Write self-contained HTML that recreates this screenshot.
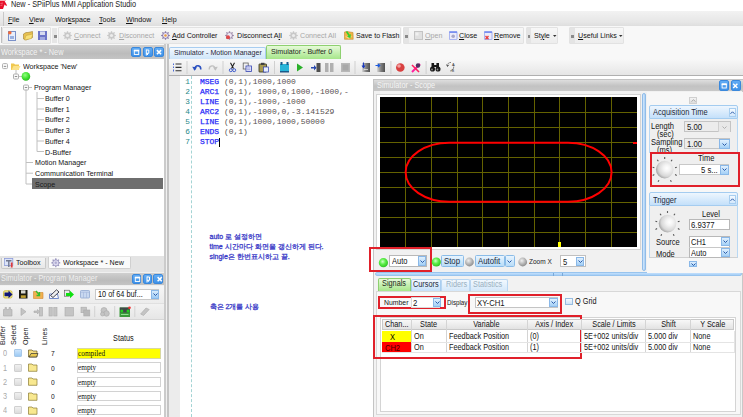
<!DOCTYPE html>
<html><head><meta charset="utf-8">
<style>
*{margin:0;padding:0;box-sizing:border-box}
html,body{width:743px;height:417px;overflow:hidden;background:#f0f0f0;font-family:"Liberation Sans",sans-serif;font-size:7.2px;color:#141414}
.a{position:absolute}
.t{position:absolute;white-space:nowrap;line-height:10px;height:10px;}
.hdr{position:absolute;background:linear-gradient(#cfcfcf,#bcbcbc 60%,#c4c4c4);color:#f4f4f4}
.hb{position:absolute;width:9.6px;height:10px;background:linear-gradient(#62acf4,#3f92e8);border:1px solid #3a88dc;border-radius:2px}
.grip{position:absolute;width:3px;height:3px;background:#9a9a9a}
</style></head><body>

<!-- title bar -->
<div class="a" style="left:0;top:0;width:743px;height:11px;background:#fff"></div>
<svg class="a" style="left:0;top:0" width="9" height="10"><rect x="0" y="0" width="6" height="1" fill="#f8b0b8"/><path d="M0 1 L4.6 1 L7 5.3 L6.2 6 L4.6 4.6 L3 9 L0 9 Z" fill="#e8102a"/><path d="M0.5 3.5 L3 3 M0.5 5.5 L2.5 5" stroke="#f8a0a8" stroke-width="0.6"/></svg>
<div class="t" style="left:10.8px;top:0.3px;font-size:8.2px;color:#222;transform:scaleX(0.895);transform-origin:0 0">New - SPiiPlus MMI Application Studio</div>

<!-- menu bar -->
<div class="a" style="left:0;top:11px;width:743px;height:15.5px;background:linear-gradient(#f2f2f2,#e6e6e6 75%,#dedede);border-bottom:1px solid #f8f8f8"></div>
<div class="a" style="left:0;top:12px;width:4px;height:14px;border-right:1px solid #c8c8c8"></div>
<div class="t" style="left:8.4px;top:14.5px;font-size:7.92px;transform:scaleX(0.9);transform-origin:0 0"><u>F</u>ile</div>
<div class="t" style="left:29.4px;top:14.5px;font-size:7.92px;transform:scaleX(0.9);transform-origin:0 0"><u>V</u>iew</div>
<div class="t" style="left:55px;top:14.5px;font-size:7.92px;transform:scaleX(0.9);transform-origin:0 0">Wor<u>k</u>space</div>
<div class="t" style="left:99.2px;top:14.5px;font-size:7.92px;transform:scaleX(0.9);transform-origin:0 0"><u>T</u>ools</div>
<div class="t" style="left:125.8px;top:14.5px;font-size:7.92px;transform:scaleX(0.9);transform-origin:0 0"><u>W</u>indow</div>
<div class="t" style="left:162.4px;top:14.5px;font-size:7.92px;transform:scaleX(0.9);transform-origin:0 0"><u>H</u>elp</div>

<!-- toolbar -->
<div class="a" style="left:0;top:26.5px;width:743px;height:18px;background:#f8f8f8"></div>
<div class="a" style="left:0;top:27.4px;width:2px;height:16px;border-right:1px solid #c0c0c0"></div>
<div class="a" style="left:2.2px;top:27.4px;width:49px;height:16.2px;background:linear-gradient(#f7f7f7,#ededed);border:1px solid #e2e2e2;border-radius:1px"></div>
<div class="a" style="left:52px;top:28px;width:5px;height:15px;background:#e6e6e6"></div><div class="grip" style="left:54px;top:34.5px;width:2.5px;height:3px;background:#8a8a8a"></div>
<svg class="a" style="left:8px;top:30.5px" width="9" height="10"><rect x="0.5" y="0.5" width="7" height="9" fill="#e8eefa" stroke="#7a90c8"/><rect x="2" y="5" width="4" height="3" fill="#9ab0e0"/><circle cx="1.8" cy="1.8" r="1.8" fill="#f06a3a"/></svg>
<svg class="a" style="left:23px;top:30.5px" width="10" height="10"><path d="M0.5 3 L3 1.5 L5 1.5 L9.5 0.5 L9.5 6.5 L3 9 L0.5 8 Z" fill="#e8c050" stroke="#a08030" stroke-width="0.6"/><path d="M1.5 9 L3 4.5 L9.8 3 L8.5 7.5 Z" fill="#f8e078" stroke="#c0a040" stroke-width="0.5"/></svg>
<svg class="a" style="left:38px;top:30.5px" width="9" height="9"><rect x="0" y="0" width="9" height="9" fill="#6c74c8"/><rect x="2" y="0.5" width="5" height="3.5" fill="#d8dcf0"/><rect x="2" y="6" width="5" height="3" fill="#a0a8e0"/></svg>

<div class="a" style="left:58.1px;top:27.4px;width:343px;height:16.2px;background:linear-gradient(#f7f7f7,#ededed);border:1px solid #e2e2e2;border-radius:1px"></div>
<svg class="a" style="left:62.5px;top:30.5px" width="9" height="9"><path d="M3.75 1.39 L3.93 0.14 L5.07 0.14 L5.25 1.39 L6.17 1.77 L7.18 1.01 L7.99 1.82 L7.23 2.83 L7.61 3.75 L8.86 3.93 L8.86 5.07 L7.61 5.25 L7.23 6.17 L7.99 7.18 L7.18 7.99 L6.17 7.23 L5.25 7.61 L5.07 8.86 L3.93 8.86 L3.75 7.61 L2.83 7.23 L1.82 7.99 L1.01 7.18 L1.77 6.17 L1.39 5.25 L0.14 5.07 L0.14 3.93 L1.39 3.75 L1.77 2.83 L1.01 1.82 L1.82 1.01 L2.83 1.77 Z" fill="#c8c8c8"/><circle cx="4.5" cy="4.5" r="1.6" fill="#ececec"/></svg>
<div class="t" style="left:74.4px;top:30.5px;color:#a8a8a8;font-size:7.92px;transform:scaleX(0.9);transform-origin:0 0"><u>C</u>onnect</div>
<svg class="a" style="left:107.4px;top:30.5px" width="9" height="9"><path d="M3.75 1.39 L3.93 0.14 L5.07 0.14 L5.25 1.39 L6.17 1.77 L7.18 1.01 L7.99 1.82 L7.23 2.83 L7.61 3.75 L8.86 3.93 L8.86 5.07 L7.61 5.25 L7.23 6.17 L7.99 7.18 L7.18 7.99 L6.17 7.23 L5.25 7.61 L5.07 8.86 L3.93 8.86 L3.75 7.61 L2.83 7.23 L1.82 7.99 L1.01 7.18 L1.77 6.17 L1.39 5.25 L0.14 5.07 L0.14 3.93 L1.39 3.75 L1.77 2.83 L1.01 1.82 L1.82 1.01 L2.83 1.77 Z" fill="#c8c8c8"/><circle cx="4.5" cy="4.5" r="1.6" fill="#ececec"/></svg>
<div class="t" style="left:119px;top:30.5px;color:#a8a8a8;font-size:7.92px;transform:scaleX(0.9);transform-origin:0 0"><u>D</u>isconnect</div>
<svg class="a" style="left:160.6px;top:30.5px" width="9" height="9"><path d="M3.75 1.39 L3.93 0.14 L5.07 0.14 L5.25 1.39 L6.17 1.77 L7.18 1.01 L7.99 1.82 L7.23 2.83 L7.61 3.75 L8.86 3.93 L8.86 5.07 L7.61 5.25 L7.23 6.17 L7.99 7.18 L7.18 7.99 L6.17 7.23 L5.25 7.61 L5.07 8.86 L3.93 8.86 L3.75 7.61 L2.83 7.23 L1.82 7.99 L1.01 7.18 L1.77 6.17 L1.39 5.25 L0.14 5.07 L0.14 3.93 L1.39 3.75 L1.77 2.83 L1.01 1.82 L1.82 1.01 L2.83 1.77 Z" fill="#8a7aa8"/><circle cx="4.5" cy="4.5" r="2.4" fill="#f0e8f8"/><circle cx="4.5" cy="4.5" r="1.3" fill="#e8a040"/></svg>
<div class="t" style="left:171.5px;top:30.5px;font-size:7.92px;transform:scaleX(0.9);transform-origin:0 0"><u>A</u>dd Controller</div>
<svg class="a" style="left:225px;top:30.5px" width="9" height="9"><path d="M3.75 1.39 L3.93 0.14 L5.07 0.14 L5.25 1.39 L6.17 1.77 L7.18 1.01 L7.99 1.82 L7.23 2.83 L7.61 3.75 L8.86 3.93 L8.86 5.07 L7.61 5.25 L7.23 6.17 L7.99 7.18 L7.18 7.99 L6.17 7.23 L5.25 7.61 L5.07 8.86 L3.93 8.86 L3.75 7.61 L2.83 7.23 L1.82 7.99 L1.01 7.18 L1.77 6.17 L1.39 5.25 L0.14 5.07 L0.14 3.93 L1.39 3.75 L1.77 2.83 L1.01 1.82 L1.82 1.01 L2.83 1.77 Z" fill="#9a88a8"/><circle cx="4.5" cy="4.5" r="2.4" fill="#f0e8f4"/><circle cx="3" cy="6.2" r="2" fill="#e04848"/></svg>
<div class="t" style="left:236.6px;top:30.5px;font-size:7.92px;transform:scaleX(0.9);transform-origin:0 0">Disconnect A<u>l</u>l</div>
<svg class="a" style="left:289.2px;top:30.5px" width="9" height="9"><path d="M3.75 1.39 L3.93 0.14 L5.07 0.14 L5.25 1.39 L6.17 1.77 L7.18 1.01 L7.99 1.82 L7.23 2.83 L7.61 3.75 L8.86 3.93 L8.86 5.07 L7.61 5.25 L7.23 6.17 L7.99 7.18 L7.18 7.99 L6.17 7.23 L5.25 7.61 L5.07 8.86 L3.93 8.86 L3.75 7.61 L2.83 7.23 L1.82 7.99 L1.01 7.18 L1.77 6.17 L1.39 5.25 L0.14 5.07 L0.14 3.93 L1.39 3.75 L1.77 2.83 L1.01 1.82 L1.82 1.01 L2.83 1.77 Z" fill="#c8c8c8"/><circle cx="4.5" cy="4.5" r="1.6" fill="#ececec"/></svg>
<div class="t" style="left:300px;top:30.5px;color:#a8a8a8;font-size:7.92px;transform:scaleX(0.9);transform-origin:0 0">Connect All</div>
<svg class="a" style="left:343.9px;top:30.9px" width="10" height="9"><path d="M0.5 1 L3 0.5 L9 1.5 L9.2 8.3 L0.5 8.3 Z" fill="#f0b444" stroke="#c08830" stroke-width="0.6"/><path d="M1 5.5 L4.5 7.8 L8.5 5.5" fill="#f8d890" stroke="none"/><path d="M2.5 0.5 L5.2 4.5" stroke="#30d030" stroke-width="1.6"/><path d="M3 5.8 L6.8 3 L6.5 7.2 Z" fill="#30d030"/></svg>
<div class="t" style="left:355.8px;top:30.5px;font-size:7.92px;transform:scaleX(0.9);transform-origin:0 0">Save to Flash</div>
<div class="a" style="left:401.6px;top:27.4px;width:1px;height:16.2px;background:#fff"></div>

<div class="a" style="left:403px;top:27.4px;width:121px;height:16.2px;background:linear-gradient(#f7f7f7,#ededed);border:1px solid #e2e2e2;border-radius:1px"></div>
<div class="a" style="left:403.5px;top:28px;width:5px;height:15px;background:#e4e4e4"></div><div class="grip" style="left:405px;top:34.5px;width:2.5px;height:3px;background:#8a8a8a"></div>
<svg class="a" style="left:414px;top:31px" width="9" height="9"><rect x="0.5" y="0.5" width="8" height="8" fill="#e0e0e0" stroke="#c4c4c4"/><rect x="1.5" y="1.5" width="3" height="3" fill="#f0f0f0"/></svg>
<div class="t" style="left:424.6px;top:30.5px;color:#a8a8a8;font-size:7.92px;transform:scaleX(0.9);transform-origin:0 0"><u>O</u>pen</div>
<svg class="a" style="left:448.9px;top:31.2px" width="9" height="9"><rect x="0.4" y="0.4" width="7.6" height="8.2" rx="0.6" fill="#ecebfa" stroke="#90a0f0" stroke-width="0.8"/><rect x="0.4" y="0.4" width="7.6" height="1.6" fill="#7a90f0"/><circle cx="4.2" cy="5.2" r="1.8" fill="#a8a8c8"/></svg>
<div class="t" style="left:459.4px;top:30.5px;font-size:7.92px;transform:scaleX(0.9);transform-origin:0 0"><u>C</u>lose</div>
<svg class="a" style="left:483.9px;top:31.2px" width="9" height="9"><rect x="0.4" y="0.4" width="7.6" height="8.2" rx="0.6" fill="#ecebfa" stroke="#90a0f0" stroke-width="0.8"/><rect x="0.4" y="0.4" width="7.6" height="1.6" fill="#7a90f0"/><path d="M1.5 5 L4.5 8.3 M4.5 5 L1.5 8.3" stroke="#e84040" stroke-width="1.3"/></svg>
<div class="t" style="left:494.3px;top:30.5px;font-size:7.92px;transform:scaleX(0.9);transform-origin:0 0"><u>R</u>emove</div>

<div class="a" style="left:525.7px;top:27.4px;width:32.3px;height:16.2px;background:linear-gradient(#f7f7f7,#ededed);border:1px solid #e2e2e2;border-radius:1px"></div>
<div class="a" style="left:526px;top:28px;width:5px;height:15px;background:#e4e4e4"></div><div class="grip" style="left:527.5px;top:34.5px;width:2.5px;height:3px;background:#8a8a8a"></div>
<div class="t" style="left:534.4px;top:30.5px;font-size:7.92px;transform:scaleX(0.9);transform-origin:0 0">St<u>y</u>le</div>
<svg class="a" style="left:552.5px;top:34.5px" width="4" height="3"><path d="M0 0 L3.5 0 L1.75 2 Z" fill="#333"/></svg>

<div class="a" style="left:569.3px;top:27.4px;width:55px;height:16.2px;background:linear-gradient(#f7f7f7,#ededed);border:1px solid #e2e2e2;border-radius:1px"></div>
<div class="a" style="left:569.6px;top:28px;width:5px;height:15px;background:#e4e4e4"></div><div class="grip" style="left:571px;top:34.5px;width:2.5px;height:3px;background:#8a8a8a"></div>
<div class="t" style="left:578.3px;top:30.5px;font-size:7.92px;transform:scaleX(0.9);transform-origin:0 0"><u>U</u>seful Links</div>
<svg class="a" style="left:619px;top:34.5px" width="4" height="3"><path d="M0 0 L3.5 0 L1.75 2 Z" fill="#333"/></svg>


<!-- left panel: workspace -->
<div class="hdr" style="left:0;top:45.2px;width:164px;height:13.5px"></div>
<div class="t" style="left:1px;top:47.5px;color:#f2f2f2;font-size:8.14px;transform:scaleX(0.9);transform-origin:0 0">Workspace * - New</div>
<div class="a" style="left:0;top:58.7px;width:164.5px;height:198px;background:#fff"></div>

<div class="hb" style="left:131.3px;top:47.3px"></div><div class="hb" style="left:143.1px;top:47.3px"></div><div class="hb" style="left:154.3px;top:47.3px"></div>
<svg class="a" style="left:131.2px;top:47.3px" width="33" height="10"><rect x="3.3" y="3.3" width="4.4" height="4.2" fill="none" stroke="#fff" stroke-width="0.9"/><rect x="2.9" y="2.8" width="5.2" height="1.6" fill="#fff"/><path d="M15.3 3 L17.8 3 L17.8 6.3 L15.3 6.3 M15.3 2.5 L15.3 8.5 M16.5 6.3 L16.5 8" stroke="#fff" stroke-width="1" fill="none"/><path d="M25.9 3.1 L30.1 7.3 M30.1 3.1 L25.9 7.3" stroke="#fff" stroke-width="1.5"/></svg>
<!-- tree -->
<svg class="a" style="left:0;top:59px" width="164" height="135">
 <g stroke="#c0c0c0" stroke-width="1" fill="none">
  <path d="M16 10 L16 15"/>
  <path d="M26 31 L26 125 L32 125"/>
  <path d="M37 33 L37 92.5 L44 92.5"/>
  <path d="M37 39.5 L44 39.5 M37 50 L44 50 M37 60.7 L44 60.7 M37 71.4 L44 71.4 M37 82 L44 82"/>
  <path d="M26 103.5 L33 103.5 M26 114.2 L33 114.2"/>
  <path d="M18.5 17.5 L22 17.5 M28.5 28.5 L32 28.5"/>
 </g>
 <rect x="2.5" y="4.6" width="5" height="5" rx="1" fill="#fafafa" stroke="#b0b0b0"/><path d="M3.8 7.4 L6.2 7.4" stroke="#909090"/>
 <rect x="13.5" y="15" width="5" height="5" rx="1" fill="#fafafa" stroke="#b0b0b0"/><path d="M14.8 17.5 L17.2 17.5" stroke="#909090"/>
 <rect x="23.5" y="26" width="5" height="5" rx="1" fill="#fafafa" stroke="#b0b0b0"/><path d="M24.8 28.5 L27.2 28.5" stroke="#909090"/>
 <path d="M11 4.5 L14 4.5 L15 5.5 L19 5.5 L19 11 L11 11 Z" fill="#f0c850"/><path d="M11.5 11 L13.5 7 L20.5 7 L18.5 11 Z" fill="#fbe28a"/>
 <defs><radialGradient id="gb" cx="40%" cy="35%" r="70%"><stop offset="0" stop-color="#90ff80"/><stop offset="0.6" stop-color="#40e030"/><stop offset="1" stop-color="#28b820"/></radialGradient></defs><circle cx="25.9" cy="17.4" r="4.3" fill="url(#gb)"/>
</svg>
<div class="t" style="left:23px;top:62.3px;font-size:7.92px;transform:scaleX(0.9);transform-origin:0 0">Workspace 'New'</div>
<div class="t" style="left:34.4px;top:83.1px;font-size:7.92px;transform:scaleX(0.9);transform-origin:0 0">Program Manager</div>
<div class="t" style="left:45px;top:94.1px;font-size:7.92px;transform:scaleX(0.9);transform-origin:0 0">Buffer 0</div>
<div class="t" style="left:45px;top:104.7px;font-size:7.92px;transform:scaleX(0.9);transform-origin:0 0">Buffer 1</div>
<div class="t" style="left:45px;top:115.4px;font-size:7.92px;transform:scaleX(0.9);transform-origin:0 0">Buffer 2</div>
<div class="t" style="left:45px;top:126.1px;font-size:7.92px;transform:scaleX(0.9);transform-origin:0 0">Buffer 3</div>
<div class="t" style="left:45px;top:136.8px;font-size:7.92px;transform:scaleX(0.9);transform-origin:0 0">Buffer 4</div>
<div class="t" style="left:45px;top:147.5px;font-size:7.92px;transform:scaleX(0.9);transform-origin:0 0">D-Buffer</div>
<div class="t" style="left:34.7px;top:158.2px;font-size:7.92px;transform:scaleX(0.9);transform-origin:0 0">Motion Manager</div>
<div class="t" style="left:34.7px;top:168.9px;font-size:7.92px;transform:scaleX(0.9);transform-origin:0 0">Communication Terminal</div>
<div class="a" style="left:32px;top:178.3px;width:131px;height:10.4px;background:#6e6e6e"></div>
<div class="t" style="left:34.7px;top:179.6px;color:#1a1a1a;font-size:7.92px;transform:scaleX(0.9);transform-origin:0 0">Scope</div>

<!-- left bottom tabs -->
<div class="a" style="left:0;top:256.4px;width:164.5px;height:15.5px;background:#e4e4e4"></div>
<div class="a" style="left:1.1px;top:257.5px;width:45.4px;height:11px;background:linear-gradient(#f4f4f4,#e8e8e8);border:1px solid #c8c8c8;border-top:none;border-radius:0 0 2px 2px"></div>
<svg class="a" style="left:4px;top:258px" width="10" height="10"><rect x="0.3" y="0.5" width="8.5" height="7" fill="#dce4f8" stroke="#8a9ad8" stroke-width="0.8"/><path d="M2 2.8 L7.5 2.8 M4.8 2.8 L4.8 9" stroke="#707890" stroke-width="1.4"/><rect x="6.8" y="4.5" width="1.8" height="5" fill="#e03a3a"/></svg>
<div class="t" style="left:15.5px;top:258px;font-size:7.92px;transform:scaleX(0.9);transform-origin:0 0">Toolbox</div>
<div class="a" style="left:47.9px;top:257px;width:83px;height:12px;background:#fafafa;border:1px solid #d0d0d0;border-top:none;border-radius:0 0 2px 2px"></div>
<svg class="a" style="left:51px;top:258.3px" width="10" height="10"><path d="M4.00 1.50 L4.22 0.34 L5.38 0.34 L5.60 1.50 L6.57 1.90 L7.54 1.23 L8.37 2.06 L7.70 3.03 L8.10 4.00 L9.26 4.22 L9.26 5.38 L8.10 5.60 L7.70 6.57 L8.37 7.54 L7.54 8.37 L6.57 7.70 L5.60 8.10 L5.38 9.26 L4.22 9.26 L4.00 8.10 L3.03 7.70 L2.06 8.37 L1.23 7.54 L1.90 6.57 L1.50 5.60 L0.34 5.38 L0.34 4.22 L1.50 4.00 L1.90 3.03 L1.23 2.06 L2.06 1.23 L3.03 1.90 Z" fill="#9c98c0"/><circle cx="4.8" cy="4.8" r="2.6" fill="#dcdaf0"/><circle cx="4.8" cy="4.8" r="1.2" fill="#b0acd0"/></svg>
<div class="t" style="left:62.5px;top:258px;font-size:7.92px;transform:scaleX(0.9);transform-origin:0 0">Workspace * - New</div>

<!-- program manager -->
<div class="hdr" style="left:0;top:272.9px;width:165px;height:12.6px"></div>
<div class="t" style="left:1px;top:274px;color:#f0f0f0;font-size:8.14px;transform:scaleX(0.9);transform-origin:0 0">Simulator - Program Manager</div>
<div class="hb" style="left:131.6px;top:274.3px"></div><div class="hb" style="left:142.5px;top:274.3px"></div><div class="hb" style="left:153.2px;top:274.3px"></div>
<svg class="a" style="left:131.6px;top:274.3px" width="32" height="10"><rect x="3.3" y="3.3" width="4.4" height="4.2" fill="none" stroke="#fff" stroke-width="0.9"/><rect x="2.9" y="2.8" width="5.2" height="1.6" fill="#fff"/><path d="M15 3 L17.5 3 L17.5 6.3 L15 6.3 M15 2.5 L15 8.5 M16.2 6.3 L16.2 8" stroke="#fff" stroke-width="1" fill="none"/><path d="M25.6 3.1 L29.8 7.3 M29.8 3.1 L25.6 7.3" stroke="#fff" stroke-width="1.5"/></svg>
<div class="a" style="left:0;top:285.5px;width:164.5px;height:17.5px;background:linear-gradient(#f6f6f6,#ececec)"></div>
<div class="a" style="left:0;top:303px;width:164.5px;height:17px;background:linear-gradient(#f2f2f2,#e6e6e6);border-top:1px solid #e0e0e0;border-bottom:1px solid #d6d6d6"></div>
<svg class="a" style="left:2px;top:289px" width="90" height="11">
 <rect x="1.5" y="1.8" width="8.5" height="7.2" rx="1.5" fill="#f4ec90" stroke="#c8b830" stroke-width="0.8"/>
 <path d="M2.5 3.5 L6.5 3.5 L6.5 1.5 L10.5 5.4 L6.5 9.2 L6.5 7.3 L2.5 7.3 Z" fill="#101878"/>
 <rect x="17" y="1" width="8.5" height="8.5" fill="#1a1a10"/><rect x="19" y="1.3" width="4.5" height="3.2" fill="#d8d8d0"/><rect x="18.8" y="6.3" width="5" height="2.6" fill="#c0a030"/>
 <path d="M31.5 2.5 L35 2.5 L36 3.5 L41 3.5 L41 9.5 L31.5 9.5 Z" fill="#f0b050" stroke="#d08830" stroke-width="0.6"/>
 <path d="M34 2 L37.5 6.2 M37.5 3 L37.5 6.5 L34.5 6.5" stroke="#30c030" stroke-width="1.3" fill="none"/>
 <path d="M47.5 5 L55.5 5 L56.5 9.5 L47.5 9.5 Z" fill="#f8f8fc" stroke="#5070c0" stroke-width="0.8"/>
 <path d="M48.5 6.5 L54.5 0.8 L57 3 L51 8.5 Z" fill="#f0f0f0" stroke="#303040" stroke-width="0.9"/>
 <rect x="62.5" y="1.2" width="5" height="6" fill="#e8e8e8" stroke="#505050" stroke-width="0.6"/>
 <path d="M64 4 L68 4 L68 1.8 L72 5.5 L68 9.2 L68 7 L64 7 Z" fill="#10e010"/>
 <rect x="78.5" y="1.5" width="9" height="7.5" rx="0.8" fill="#c8d8f0" stroke="#90a8d0" stroke-width="0.8"/><path d="M78.5 3.3 L87.5 3.3 M81.5 3.3 L81.5 9 M84.5 3.3 L84.5 9" stroke="#a0b4d8" stroke-width="0.6"/>
</svg>
<div class="a" style="left:95px;top:288.9px;width:64px;height:11.4px;background:#fff;border:1px solid #c8c8c8"></div>
<div class="t" style="left:97.5px;top:289.8px;font-size:8.14px;transform:scaleX(0.9);transform-origin:0 0">10 of 64 buf...</div>
<div class="a" style="left:150.5px;top:290px;width:8px;height:9.2px;background:linear-gradient(#d8ecfc,#9ccaf4);border:1px solid #8ab8e8"></div>
<svg class="a" style="left:152.5px;top:293px" width="5" height="4"><path d="M0.5 0.5 L2.5 2.5 L4.5 0.5" stroke="#2a5aa8" stroke-width="1" fill="none"/></svg>
<svg class="a" style="left:0px;top:305.5px" width="160" height="12">
 <g fill="#c4c4c4" stroke="#aaa" stroke-width="0.6">
 <path d="M3.5 3.5 L5 3.5 L5 1.5 L6.5 1.5 L6.5 3.5 L9 3.5 L9 1.5 L10.5 1.5 L10.5 3.5 L12 3.5 L12 10 L3.5 10 Z"/>
 <path d="M21 2 L26 5.7 L21 9.5 Z"/>
 <path d="M34 5 L37.5 5 L37.5 3.5 L39.5 5.7 L37.5 8 L37.5 6.5 L34 6.5 Z"/><rect x="39.5" y="1.5" width="3" height="8.5"/>
 <rect x="49" y="1.5" width="3.2" height="8.5"/><rect x="53.8" y="1.5" width="3.2" height="8.5"/>
 <rect x="65" y="1.5" width="8.5" height="8.5"/>
 <rect x="81" y="1.2" width="5.5" height="5.5"/><rect x="83.8" y="4" width="6" height="6" fill="#b8b8b8"/>
 <circle cx="104" cy="4.5" r="3"/><circle cx="106.5" cy="7.5" r="2.8"/><circle cx="102.5" cy="8" r="2"/>
 <path d="M140.6 8 L146 2 L149.2 3.5 L143.5 9.5 Z"/>
 </g>
 <rect x="94.3" y="0" width="0.9" height="11" fill="#cfcfcf"/><rect x="114.3" y="0" width="0.9" height="11" fill="#cfcfcf"/><rect x="134.4" y="0" width="0.9" height="11" fill="#cfcfcf"/>
 <rect x="119.5" y="1.5" width="10.5" height="9.5" fill="#3a9a3a"/><rect x="120" y="1.5" width="9.5" height="5" fill="#404848"/>
 <circle cx="121.8" cy="5" r="1.5" fill="#20d020"/><circle cx="128" cy="5" r="1.5" fill="#20d020"/><circle cx="129.5" cy="1.8" r="1.3" fill="#f03030"/>
 <path d="M121 8.5 L128.5 8.5" stroke="#90e090" stroke-width="1"/>
</svg>
<div class="a" style="left:0;top:320px;width:164.5px;height:97px;background:#fff"></div>
<!-- pm table -->
<div class="t" style="left:-1.8px;top:344.8px;font-size:7.2px;transform:rotate(-90deg);transform-origin:0 0;line-height:10px;color:#222">Buffer</div><div class="t" style="left:9.2px;top:344.8px;font-size:7.2px;transform:rotate(-90deg);transform-origin:0 0;line-height:10px;color:#222">Select</div><div class="t" style="left:21.0px;top:344.8px;font-size:7.2px;transform:rotate(-90deg);transform-origin:0 0;line-height:10px;color:#222">Open</div><div class="t" style="left:39.5px;top:344.8px;font-size:7.2px;transform:rotate(-90deg);transform-origin:0 0;line-height:10px;color:#222">Lines</div><div class="t" style="left:113px;top:333.7px;font-size:8.14px;transform:scaleX(0.9);transform-origin:0 0">Status</div><div class="t" style="left:2.5px;top:349.4px;font-size:8.14px;color:#aaa;transform:scaleX(0.9);transform-origin:0 0">0</div><div class="a" style="left:13.5px;top:349.4px;width:8px;height:8px;background:linear-gradient(#cce4fc,#9ccaf4);border:1px solid #a8c8e8;border-radius:1px"></div><svg class="a" style="left:27.5px;top:348.9px" width="11" height="9"><path d="M0.5 1 L4 1 L5 2 L9 2 L9 8 L0.5 8 Z" fill="#f4dc80" stroke="#6a5a20" stroke-width="0.7"/><path d="M1 8 L3 4.5 L10 4.5 L8.5 8 Z" fill="#e8c850" stroke="#333" stroke-width="0.7"/></svg><div class="t" style="left:51.3px;top:349.4px;font-size:7.4px;transform:scaleX(0.9);transform-origin:0 0">7</div><div class="a" style="left:77.3px;top:348.1px;width:83.4px;height:10.6px;background:#ffff00;border:1px solid #d8d8a0"></div><div class="t" style="left:78.3px;top:349.1px;font-family:'Liberation Serif',serif;font-size:8.1px;color:#111;transform:scaleX(0.9);transform-origin:0 0">compiled</div><div class="t" style="left:2.5px;top:363.6px;font-size:8.14px;color:#aaa;transform:scaleX(0.9);transform-origin:0 0">1</div><div class="a" style="left:13.5px;top:363.6px;width:8px;height:8px;background:linear-gradient(#f0f0f0,#dcdcdc);border:1px solid #d0d0d0;border-radius:1px"></div><svg class="a" style="left:27.5px;top:363.1px" width="11" height="9"><path d="M0.5 1 L4 1 L5 2 L9 2 L9 8.3 L0.5 8.3 Z" fill="#f8e890" stroke="#8a7a30" stroke-width="0.7"/></svg><div class="t" style="left:51.3px;top:363.6px;font-size:7.4px;transform:scaleX(0.9);transform-origin:0 0">0</div><div class="a" style="left:77.3px;top:362.3px;width:83.4px;height:10.6px;background:#fff;border:1px solid #d2d2d2"></div><div class="t" style="left:78.3px;top:363.3px;font-family:'Liberation Serif',serif;font-size:8.1px;color:#111;transform:scaleX(0.9);transform-origin:0 0">empty</div><div class="t" style="left:2.5px;top:377.8px;font-size:8.14px;color:#aaa;transform:scaleX(0.9);transform-origin:0 0">2</div><div class="a" style="left:13.5px;top:377.8px;width:8px;height:8px;background:linear-gradient(#f0f0f0,#dcdcdc);border:1px solid #d0d0d0;border-radius:1px"></div><svg class="a" style="left:27.5px;top:377.3px" width="11" height="9"><path d="M0.5 1 L4 1 L5 2 L9 2 L9 8.3 L0.5 8.3 Z" fill="#f8e890" stroke="#8a7a30" stroke-width="0.7"/></svg><div class="t" style="left:51.3px;top:377.8px;font-size:7.4px;transform:scaleX(0.9);transform-origin:0 0">0</div><div class="a" style="left:77.3px;top:376.5px;width:83.4px;height:10.6px;background:#fff;border:1px solid #d2d2d2"></div><div class="t" style="left:78.3px;top:377.5px;font-family:'Liberation Serif',serif;font-size:8.1px;color:#111;transform:scaleX(0.9);transform-origin:0 0">empty</div><div class="t" style="left:2.5px;top:392.0px;font-size:8.14px;color:#aaa;transform:scaleX(0.9);transform-origin:0 0">3</div><div class="a" style="left:13.5px;top:392.0px;width:8px;height:8px;background:linear-gradient(#f0f0f0,#dcdcdc);border:1px solid #d0d0d0;border-radius:1px"></div><svg class="a" style="left:27.5px;top:391.5px" width="11" height="9"><path d="M0.5 1 L4 1 L5 2 L9 2 L9 8.3 L0.5 8.3 Z" fill="#f8e890" stroke="#8a7a30" stroke-width="0.7"/></svg><div class="t" style="left:51.3px;top:392.0px;font-size:7.4px;transform:scaleX(0.9);transform-origin:0 0">0</div><div class="a" style="left:77.3px;top:390.7px;width:83.4px;height:10.6px;background:#fff;border:1px solid #d2d2d2"></div><div class="t" style="left:78.3px;top:391.7px;font-family:'Liberation Serif',serif;font-size:8.1px;color:#111;transform:scaleX(0.9);transform-origin:0 0">empty</div><div class="t" style="left:2.5px;top:406.2px;font-size:8.14px;color:#aaa;transform:scaleX(0.9);transform-origin:0 0">4</div><div class="a" style="left:13.5px;top:406.2px;width:8px;height:8px;background:linear-gradient(#f0f0f0,#dcdcdc);border:1px solid #d0d0d0;border-radius:1px"></div><svg class="a" style="left:27.5px;top:405.7px" width="11" height="9"><path d="M0.5 1 L4 1 L5 2 L9 2 L9 8.3 L0.5 8.3 Z" fill="#f8e890" stroke="#8a7a30" stroke-width="0.7"/></svg><div class="t" style="left:51.3px;top:406.2px;font-size:7.4px;transform:scaleX(0.9);transform-origin:0 0">0</div><div class="a" style="left:77.3px;top:404.9px;width:83.4px;height:10.6px;background:#fff;border:1px solid #d2d2d2"></div><div class="t" style="left:78.3px;top:405.9px;font-family:'Liberation Serif',serif;font-size:8.1px;color:#111;transform:scaleX(0.9);transform-origin:0 0">empty</div><!-- splitter -->
<div class="a" style="left:164px;top:44px;width:5px;height:373px;background:#f0f0f0;border-left:2px solid #cbcbcb;border-right:2px solid #c4c4c4"></div>
<!-- editor -->
<div class="a" style="left:169px;top:44px;width:574px;height:15px;background:#f8f8f8"></div>
<div class="a" style="left:169px;top:58.7px;width:574px;height:17.3px;background:linear-gradient(#f8f8f8,#e6e6e6);border-bottom:1px solid #b0b0b0"></div>
<div class="a" style="left:169px;top:76px;width:574px;height:341px;background:#fff"></div>
<div class="a" style="left:169px;top:76px;width:10.5px;height:341px;background:#ececec"></div>
<div class="a" style="left:191px;top:76px;width:0;height:341px;border-left:1px dashed #a4d4d4"></div>

<!-- editor tabs -->
<div class="a" style="left:169px;top:46.8px;width:97px;height:12px;background:linear-gradient(#f2f8fe,#cfe6fa);border:1px solid #a8cdf0;border-bottom:none;border-radius:2px 2px 0 0"></div>
<div class="t" style="left:174.4px;top:48px;color:#2a2a3a;font-size:7.92px;transform:scaleX(0.9);transform-origin:0 0">Simulator - Motion Manager</div>
<div class="a" style="left:266px;top:45.2px;width:74.5px;height:13.6px;background:linear-gradient(#e6fad8,#a6e68a);border:1px solid #8ed070;border-bottom:none;border-radius:2px 2px 0 0"></div>
<div class="t" style="left:271px;top:47.2px;color:#1e2a1a;font-size:7.92px;transform:scaleX(0.9);transform-origin:0 0">Simulator - Buffer 0</div>
<svg class="a" style="left:170px;top:60px" width="300" height="15">
 <rect x="16.5" y="1" width="1" height="13" fill="#d0d0d0"/><rect x="52.5" y="1" width="1" height="13" fill="#d0d0d0"/><rect x="104" y="1" width="1" height="13" fill="#d0d0d0"/><rect x="184.5" y="1" width="1" height="13" fill="#d0d0d0"/><rect x="220.4" y="1" width="1" height="13" fill="#d0d0d0"/><rect x="255.6" y="1" width="1" height="13" fill="#d0d0d0"/>
 <path d="M3.5 3.5 L3.5 5 M3.5 6.5 L3.5 8 M3.5 9.5 L3.5 11.5" stroke="#4a6ad8" stroke-width="1"/><path d="M5.5 4 L11.5 4 M5.5 7.4 L11.5 7.4 M5.5 10.8 L11.5 10.8" stroke="#303030" stroke-width="1.1"/>
 <path d="M24.5 9.8 Q25 5.5 28.2 5.8 Q31 6.2 30.8 9.5" stroke="#2a50c0" stroke-width="1.5" fill="none"/><path d="M22.2 6.8 L24.6 10.8 L27 7.2 Z" fill="#2a50c0"/>
 <path d="M45.5 9.8 Q45 5.5 41.8 5.8 Q39 6.2 39.2 9.5" stroke="#c0c0c0" stroke-width="1.3" fill="none"/><path d="M47.8 6.8 L45.4 10.8 L43 7.2 Z" fill="#c0c0c0"/>
 <path d="M60.5 2.7 L63.5 8.5 M64.5 2.7 L61.5 8.5" stroke="#202020" stroke-width="1.1"/><circle cx="60.8" cy="10.2" r="1.5" fill="none" stroke="#3050c8" stroke-width="0.9"/><circle cx="64.2" cy="10.2" r="1.5" fill="none" stroke="#3050c8" stroke-width="0.9"/>
 <rect x="73.2" y="3" width="5" height="6" fill="#f0f0f0" stroke="#606060" stroke-width="0.8"/><rect x="76" y="6" width="5.5" height="5.5" fill="#f4f4ff" stroke="#3040b0" stroke-width="0.8"/><path d="M77 8 L80.5 8 M77 9.8 L80.5 9.8" stroke="#3040b0" stroke-width="0.5"/>
 <rect x="89" y="4" width="7.5" height="8" rx="0.5" fill="#a89a50" stroke="#303020" stroke-width="0.8"/><rect x="91" y="2.8" width="3.5" height="2.2" fill="#404040"/><rect x="93.5" y="7" width="5" height="5" fill="#e8eefc" stroke="#3040b0" stroke-width="0.7"/>
 <rect x="110" y="4" width="9" height="8" fill="#28b4d8"/><rect x="110.5" y="2" width="2" height="3" fill="#1a5a8a"/><rect x="116.5" y="2" width="2" height="3" fill="#1a5a8a"/><rect x="110" y="11" width="9" height="1.5" fill="#1a5a8a"/>
 <path d="M127 3.5 L133 7.5 L127 11.5 Z" fill="#2ab02a"/>
 <rect x="141" y="7" width="5" height="1.5" fill="#2a4ab0"/><path d="M144 5 L146.5 7.75 L144 10.5 Z" fill="#2a4ab0"/><rect x="146.5" y="3" width="4" height="9" fill="#505050"/>
 <rect x="155" y="3" width="3.5" height="9" fill="#b0b0b0"/><rect x="160" y="3" width="3.5" height="9" fill="#b0b0b0"/>
 <rect x="171" y="3" width="9" height="9" fill="#b8b8b8"/><rect x="172.5" y="4.5" width="6" height="6" fill="#a8a8a8"/>
 <defs><linearGradient id="gd" x1="0" x2="1"><stop offset="0" stop-color="#d8d8d8"/><stop offset="0.5" stop-color="#808080"/><stop offset="1" stop-color="#505050"/></linearGradient></defs><rect x="192" y="3" width="8" height="9" fill="url(#gd)"/><path d="M193.5 2.5 L193.5 7 M192 5.5 L193.5 7.5 L195 5.5" stroke="#1a3ac0" stroke-width="1.1" fill="none"/><path d="M194 9.5 L198 9.5" stroke="#fff" stroke-width="0.6"/>
 <rect x="207" y="3" width="8" height="9" fill="url(#gd)"/><path d="M205.5 5.5 L209.5 5.5 M208 4 L209.8 5.5 L208 7" stroke="#1a5ae0" stroke-width="1.1" fill="none"/>
 <circle cx="230.3" cy="7.5" r="4.3" fill="#d84040"/><circle cx="229" cy="6" r="1.8" fill="#f4a0a0"/>
 <path d="M242 12 L250 4" stroke="#ff20a0" stroke-width="2"/><path d="M242 5 L249 12" stroke="#ff2060" stroke-width="1.6"/><circle cx="248" cy="5.5" r="2.2" fill="#503060"/>
 <rect x="261.5" y="3" width="2.6" height="4" fill="#181818"/><rect x="266.4" y="3" width="2.6" height="4" fill="#181818"/><rect x="263.5" y="5" width="3.5" height="2" fill="#181818"/><ellipse cx="262.5" cy="9" rx="2.5" ry="2.6" fill="#181818"/><ellipse cx="268" cy="9" rx="2.5" ry="2.6" fill="#181818"/><circle cx="262" cy="9.5" r="0.9" fill="#888"/><circle cx="267.5" cy="9.5" r="0.9" fill="#888"/>
 <path d="M277.5 6 Q277.5 2.5 281 2.5" stroke="#404040" stroke-width="0.9" fill="none" stroke-dasharray="1 0.6"/><path d="M276.5 4.5 L277.5 6.5 L278.8 4.8" stroke="#404040" stroke-width="0.8" fill="none"/><path d="M283.5 5 Q284.5 10 280 11" stroke="#404040" stroke-width="0.9" fill="none" stroke-dasharray="1 0.6"/><text x="282" y="5.5" font-size="4" fill="#404040" font-family="Liberation Sans">A</text><text x="281.5" y="11.5" font-size="4" fill="#404040" font-family="Liberation Sans">B</text>
</svg>
<!-- code -->
<div class="a" style="left:182px;top:76.5px;width:8px;font-family:'Liberation Mono',monospace;font-size:7.8px;line-height:10.1px;color:#2a8a8a;text-align:right">1<br>2<br>3<br>4<br>5<br>6<br>7</div>
<div class="a" style="left:199.9px;top:76.5px;font-family:'Liberation Mono',monospace;font-size:8px;line-height:10.1px;color:#585050;white-space:pre"><b style="color:#2a2af8;font-weight:normal;-webkit-text-stroke:0.25px #2a2af8">MSEG</b> (0,1),1000,1000
<b style="color:#2a2af8;font-weight:normal;-webkit-text-stroke:0.25px #2a2af8">ARC1</b> (0,1), 1000,0,1000,-1000,-
<b style="color:#2a2af8;font-weight:normal;-webkit-text-stroke:0.25px #2a2af8">LINE</b> (0,1),-1000,-1000
<b style="color:#2a2af8;font-weight:normal;-webkit-text-stroke:0.25px #2a2af8">ARC2</b> (0,1),-1000,0,-3.141529
<b style="color:#2a2af8;font-weight:normal;-webkit-text-stroke:0.25px #2a2af8">LINE</b> (0,1),1000,1000,50000
<b style="color:#2a2af8;font-weight:normal;-webkit-text-stroke:0.25px #2a2af8">ENDS</b> (0,1)
<b style="color:#2a2af8;font-weight:normal;-webkit-text-stroke:0.25px #2a2af8">STOP</b></div>
<div class="a" style="left:218.6px;top:137.5px;width:1px;height:9.5px;background:#000"></div>
<div class="a" style="left:209.5px;top:232.4px;font-size:7px;line-height:9.8px;color:#3c3cc8;white-space:pre;-webkit-text-stroke:0.3px #3c3cc8">auto 로 설정하면
time 시간마다 화면을 갱신하게 된다.
single은 한번표시하고 끝.</div>
<div class="a" style="left:209.5px;top:301.8px;font-size:7px;line-height:9.8px;color:#3c3cc8;white-space:pre;-webkit-text-stroke:0.3px #3c3cc8">축은 2개를 사용</div>
<!-- scope window -->
<div class="a" style="left:372.5px;top:79.3px;width:371px;height:338px;background:#f1f1f1;border-left:1px solid #c4c4c4;border-top:1px solid #c4c4c4;border-right:2px solid #c8c8c8"></div>
<div class="hdr" style="left:373.5px;top:79.8px;width:370px;height:11.4px;background:linear-gradient(#dedede,#c2c2c2 55%,#c8c8c8)"></div>
<div class="t" style="left:377px;top:80.6px;color:#f4f4f4;font-size:8.14px;transform:scaleX(0.9);transform-origin:0 0">Simulator - Scope</div>
<div class="hb" style="left:719.1px;top:80.4px;height:10.4px;width:10px"></div><div class="hb" style="left:730.8px;top:80.4px;height:10.4px;width:10px"></div>
<svg class="a" style="left:719.4px;top:80.8px" width="22" height="10"><rect x="3.1" y="3" width="4.2" height="4" fill="none" stroke="#fff" stroke-width="0.9"/><rect x="2.7" y="2.5" width="5" height="1.6" fill="#fff"/><path d="M14.2 2.8 L18.4 7 M18.4 2.8 L14.2 7" stroke="#fff" stroke-width="1.5"/></svg>
<div class="a" style="left:376px;top:94.1px;width:264.8px;height:155.6px;background:#fff;border:1px solid #d4d4d4"></div>
<svg class="a" style="left:380px;top:97px" width="257" height="150" shape-rendering="crispEdges">
 <rect width="257" height="150" fill="#000"/>
 <g fill="#646200"><rect x="25" y="0" width="1" height="150"/><rect x="51" y="0" width="1" height="150"/><rect x="77" y="0" width="1" height="150"/><rect x="102" y="0" width="1" height="150"/><rect x="128" y="0" width="1" height="150"/><rect x="154" y="0" width="1" height="150"/><rect x="179" y="0" width="1" height="150"/><rect x="205" y="0" width="1" height="150"/><rect x="231" y="0" width="1" height="150"/><rect x="0" y="15" width="257" height="1"/><rect x="0" y="30" width="257" height="1"/><rect x="0" y="45" width="257" height="1"/><rect x="0" y="60" width="257" height="1"/><rect x="0" y="75" width="257" height="1"/><rect x="0" y="90" width="257" height="1"/><rect x="0" y="105" width="257" height="1"/><rect x="0" y="120" width="257" height="1"/><rect x="0" y="135" width="257" height="1"/></g>
 <g shape-rendering="geometricPrecision"><path d="M69.20 45.70 L188.00 45.70 A43.60 29.50 0 0 1 188.00 104.70 L69.20 104.70 A43.60 29.50 0 0 1 69.20 45.70 Z" fill="none" stroke="#ff0000" stroke-width="2"/></g>
 <rect x="253" y="45" width="4" height="2" fill="#ff0000"/>
 <rect x="178" y="145" width="3" height="5" fill="#ffff00"/>
</svg>
<!-- scope controls -->
<div class="a" style="left:369.3px;top:247.3px;width:63px;height:24.5px;border:2px solid #e0202a"></div>
<svg class="a" style="left:378px;top:256.5px" width="200" height="12">
 <defs><radialGradient id="gg" cx="42%" cy="38%" r="65%"><stop offset="0" stop-color="#d0ffc8"/><stop offset="0.45" stop-color="#5ef04a"/><stop offset="1" stop-color="#2cc020"/></radialGradient>
 <radialGradient id="gy" cx="40%" cy="35%" r="70%"><stop offset="0" stop-color="#f0f0f0"/><stop offset="0.6" stop-color="#b0b0b0"/><stop offset="1" stop-color="#888"/></radialGradient></defs>
 <circle cx="5.4" cy="5.7" r="4.6" fill="url(#gg)"/>
 <circle cx="58.3" cy="5" r="4.6" fill="url(#gg)"/>
 <circle cx="91.4" cy="5" r="4.4" fill="url(#gy)"/>
 <circle cx="144.7" cy="5" r="4.4" fill="url(#gy)"/>
</svg>
<div class="a" style="left:389.2px;top:255.3px;width:38px;height:11.5px;background:#fff;border:1px solid #b8b8b8"></div>
<div class="t" style="left:391.5px;top:256.2px;font-size:8.36px;transform:scaleX(0.9);transform-origin:0 0">Auto</div>
<div class="a" style="left:418px;top:256.3px;width:8.2px;height:9.5px;background:linear-gradient(#e0f0fe,#a4d0f6);border:1px solid #8ab8e8"></div>
<svg class="a" style="left:420px;top:259.5px" width="5" height="4"><path d="M0.5 0.5 L2.5 2.5 L4.5 0.5" stroke="#2a5aa8" stroke-width="1" fill="none"/></svg>
<div class="a" style="left:441px;top:255.3px;width:23px;height:11.4px;background:linear-gradient(#e8f4fe,#b8dcf8);border:1px solid #8abce8;border-radius:1.5px"></div>
<div class="t" style="left:444.3px;top:256px;font-size:8.69px;color:#1a2a3a;transform:scaleX(0.9);transform-origin:0 0">Stop</div>
<div class="a" style="left:474.6px;top:255.3px;width:30px;height:11.4px;background:linear-gradient(#e8f4fe,#b8dcf8);border:1px solid #8abce8;border-radius:1.5px"></div>
<div class="t" style="left:477.6px;top:256px;font-size:8.69px;color:#1a2a3a;transform:scaleX(0.9);transform-origin:0 0">Autofit</div>
<div class="a" style="left:505px;top:255.3px;width:9.5px;height:11.4px;background:linear-gradient(#e8f4fe,#b8dcf8);border:1px solid #8abce8;border-radius:1.5px"></div>
<svg class="a" style="left:507.3px;top:259.5px" width="5" height="4"><path d="M0.5 0.5 L2.5 2.5 L4.5 0.5" stroke="#2a5aa8" stroke-width="1" fill="none"/></svg>
<div class="t" style="left:528.9px;top:256.5px;font-size:7.26px;color:#222;transform:scaleX(0.9);transform-origin:0 0">Zoom X</div>
<div class="a" style="left:560.4px;top:255.3px;width:25.2px;height:11.8px;background:#fff;border:1px solid #c0c0c0"></div>
<div class="t" style="left:563px;top:256.5px;font-size:8.36px;transform:scaleX(0.9);transform-origin:0 0">5</div>
<div class="a" style="left:576px;top:256.5px;width:8.4px;height:9.5px;background:linear-gradient(#e0f0fe,#a4d0f6);border:1px solid #8ab8e8"></div>
<svg class="a" style="left:578px;top:259.7px" width="5" height="4"><path d="M0.5 0.5 L2.5 2.5 L4.5 0.5" stroke="#2a5aa8" stroke-width="1" fill="none"/></svg>
<!-- blue splitter line -->
<div class="a" style="left:374.5px;top:272px;width:367px;height:3.8px;background:linear-gradient(#c4e0fc,#a4cef6);border:1px solid #98c4ee;border-radius:2px"></div><div class="a" style="left:553px;top:272.5px;width:0.8px;height:3px;background:#78a8d8"></div><div class="a" style="left:562.3px;top:272.5px;width:0.8px;height:3px;background:#78a8d8"></div>
<!-- right panel -->
<div class="a" style="left:642.3px;top:93.2px;width:3.8px;height:177.6px;background:linear-gradient(90deg,#d4e8fc,#a8cef4);border:1px solid #90bce8;border-radius:2px"></div>
<div class="a" style="left:646.5px;top:92px;width:96.5px;height:181px;background:#f7f7f7"></div>
<div class="a" style="left:689px;top:96.7px;width:8px;height:7px;background:linear-gradient(#f4f4f4,#dcdcdc);border:1px solid #d0d0d0"></div>
<svg class="a" style="left:691px;top:98.5px" width="5" height="4"><path d="M0.5 2.5 L2.5 0.8 L4.5 2.5" stroke="#999" stroke-width="0.8" fill="none"/></svg>
<!-- acquisition -->
<div class="a" style="left:649.4px;top:118.5px;width:89px;height:34px;background:#efefef;border-left:1px solid #b8d8f4;border-right:1px solid #b8d8f4"></div>
<div class="a" style="left:649.4px;top:105.3px;width:89px;height:13.4px;background:linear-gradient(#eef6fe,#c4e0fa);border:1px solid #a4ccf0;border-radius:2px 2px 0 0"></div>
<div class="t" style="left:652.5px;top:107.2px;font-size:8.36px;color:#1e2a3a;transform:scaleX(0.9);transform-origin:0 0">Acquisition Time</div>
<div class="a" style="left:728.8px;top:107.5px;width:7.5px;height:9px;background:linear-gradient(#f4faff,#d4e8fc);border:1px solid #a8cef0"></div>
<svg class="a" style="left:730.3px;top:110.5px" width="5" height="4"><path d="M0.5 2.8 L2.5 0.8 L4.5 2.8" stroke="#2a5aa8" stroke-width="1" fill="none"/></svg>
<div class="t" style="left:651.4px;top:120.5px;font-size:8.36px;transform:scaleX(0.9);transform-origin:0 0">Length</div>
<div class="t" style="left:656.5px;top:128.8px;font-size:8.36px;transform:scaleX(0.9);transform-origin:0 0">(sec)</div>
<div class="t" style="left:651.4px;top:137.2px;font-size:8.36px;transform:scaleX(0.9);transform-origin:0 0">Sampling</div>
<div class="t" style="left:656.8px;top:145.4px;font-size:8.36px;transform:scaleX(0.9);transform-origin:0 0">(ms)</div>
<div class="a" style="left:684.1px;top:121.4px;width:46.7px;height:11.1px;background:#ececec;border:1px solid #c4c4c4"></div>
<div class="t" style="left:686.5px;top:122.2px;font-size:8.58px;transform:scaleX(0.9);transform-origin:0 0">5.00</div>
<div class="a" style="left:718.4px;top:122px;width:12px;height:10px;background:#e8e8e8;border-left:1px solid #d0d0d0"></div>
<svg class="a" style="left:722px;top:125.5px" width="5" height="4"><path d="M0.5 0.5 L2.5 2.5 L4.5 0.5" stroke="#b0b0b0" stroke-width="1" fill="none"/></svg>
<div class="a" style="left:684.1px;top:138.4px;width:46px;height:11.1px;background:#ececec;border:1px solid #c4c4c4"></div>
<div class="t" style="left:686.5px;top:139.2px;font-size:8.58px;transform:scaleX(0.9);transform-origin:0 0">1.00</div>
<div class="a" style="left:718.6px;top:139px;width:11.4px;height:10px;background:linear-gradient(#e0f0fe,#a4d0f6);border:1px solid #8ab8e8"></div>
<svg class="a" style="left:721.8px;top:142.5px" width="5" height="4"><path d="M0.5 0.5 L2.5 2.5 L4.5 0.5" stroke="#2a5aa8" stroke-width="1" fill="none"/></svg>
<!-- time red box -->
<div class="a" style="left:650px;top:152.3px;width:89.8px;height:35px;background:#efefef;border:2px solid #e0202a"></div>
<div class="t" style="left:697.5px;top:152.5px;font-size:8.36px;transform:scaleX(0.9);transform-origin:0 0">Time</div>
<svg class="a" style="left:650px;top:155px" width="30" height="30" id="knob1">
 <defs><radialGradient id="kn" cx="62%" cy="42%" r="62%"><stop offset="0" stop-color="#ffffff"/><stop offset="0.3" stop-color="#f4f4f4"/><stop offset="0.75" stop-color="#d8d8d8"/><stop offset="1" stop-color="#a8a8a8"/></radialGradient></defs>
 <circle cx="14.7" cy="14.6" r="8.8" fill="url(#kn)"/><g stroke="#505050" stroke-width="1.1"><path d="M14.70 3.90 L14.70 2.10"/><path d="M8.34 6.22 L7.26 4.78"/><path d="M21.06 6.22 L22.14 4.78"/><path d="M4.38 12.67 L2.62 12.33"/><path d="M25.02 12.67 L26.78 12.33"/><path d="M4.31 19.61 L2.69 20.39"/><path d="M25.09 19.61 L26.71 20.39"/><path d="M8.93 25.21 L8.07 26.79"/><path d="M20.47 25.21 L21.33 26.79"/></g>
</svg>
<div class="a" style="left:679.3px;top:164.3px;width:50.1px;height:11.2px;background:#fff;border:1px solid #c8c8c8"></div>
<div class="t" style="left:700.5px;top:165.2px;font-size:8.58px;transform:scaleX(0.9);transform-origin:0 0">5 s...</div>
<div class="a" style="left:719.5px;top:165px;width:9.4px;height:9.8px;background:linear-gradient(#e0f0fe,#a4d0f6);border:1px solid #8ab8e8"></div>
<svg class="a" style="left:721.8px;top:168.3px" width="5" height="4"><path d="M0.5 0.5 L2.5 2.5 L4.5 0.5" stroke="#2a5aa8" stroke-width="1" fill="none"/></svg>
<!-- trigger -->
<div class="a" style="left:649.4px;top:206px;width:89px;height:52.4px;background:#efefef;border-left:1px solid #b8d8f4;border-right:1px solid #b8d8f4;border-bottom:1px solid #d0d0d0"></div>
<div class="a" style="left:649.4px;top:192.2px;width:89px;height:14px;background:linear-gradient(#eef6fe,#c4e0fa);border:1px solid #a4ccf0;border-radius:2px 2px 0 0"></div>
<div class="t" style="left:652.8px;top:194.5px;font-size:8.36px;color:#1e2a3a;transform:scaleX(0.9);transform-origin:0 0">Trigger</div>
<div class="a" style="left:728.8px;top:194.5px;width:7.5px;height:9.2px;background:linear-gradient(#f4faff,#d4e8fc);border:1px solid #a8cef0"></div>
<svg class="a" style="left:730.3px;top:197.5px" width="5" height="4"><path d="M0.5 2.8 L2.5 0.8 L4.5 2.8" stroke="#2a5aa8" stroke-width="1" fill="none"/></svg>
<div class="t" style="left:701.5px;top:208.5px;font-size:8.36px;transform:scaleX(0.9);transform-origin:0 0">Level</div>
<svg class="a" style="left:653px;top:208.6px" width="30" height="30">
 <circle cx="14.5" cy="14.6" r="8.8" fill="url(#kn)"/><g stroke="#505050" stroke-width="1.1"><path d="M14.50 3.90 L14.50 2.10"/><path d="M8.14 6.22 L7.06 4.78"/><path d="M20.86 6.22 L21.94 4.78"/><path d="M4.18 12.67 L2.42 12.33"/><path d="M24.82 12.67 L26.58 12.33"/><path d="M4.11 19.61 L2.49 20.39"/><path d="M24.89 19.61 L26.51 20.39"/><path d="M8.73 25.21 L7.87 26.79"/><path d="M20.27 25.21 L21.13 26.79"/></g>
</svg>
<div class="a" style="left:689.1px;top:218.7px;width:41.3px;height:11.2px;background:#fff;border:1px solid #b8b8b8"></div>
<div class="t" style="left:691px;top:219.5px;font-size:8.58px;transform:scaleX(0.9);transform-origin:0 0">6.9377</div>
<div class="t" style="left:655.7px;top:237.3px;font-size:8.36px;transform:scaleX(0.9);transform-origin:0 0">Source</div>
<div class="t" style="left:655.7px;top:248.5px;font-size:8.36px;transform:scaleX(0.9);transform-origin:0 0">Mode</div>
<div class="a" style="left:689.1px;top:235.8px;width:41.3px;height:22.6px;background:#fff;border:1px solid #b8b8b8"></div>
<div class="a" style="left:689.1px;top:246.8px;width:41.3px;height:1px;background:#c8c8c8"></div>
<div class="t" style="left:691px;top:237.2px;font-size:8.36px;transform:scaleX(0.9);transform-origin:0 0">CH1</div>
<div class="t" style="left:691px;top:248.3px;font-size:8.36px;transform:scaleX(0.9);transform-origin:0 0">Auto</div>
<div class="a" style="left:720.5px;top:236.8px;width:9px;height:9.4px;background:linear-gradient(#e0f0fe,#a4d0f6);border:1px solid #8ab8e8"></div>
<svg class="a" style="left:722.6px;top:240px" width="5" height="4"><path d="M0.5 0.5 L2.5 2.5 L4.5 0.5" stroke="#2a5aa8" stroke-width="1" fill="none"/></svg>
<div class="a" style="left:720.5px;top:248px;width:9px;height:9.4px;background:linear-gradient(#e0f0fe,#a4d0f6);border:1px solid #8ab8e8"></div>
<svg class="a" style="left:722.6px;top:251.2px" width="5" height="4"><path d="M0.5 0.5 L2.5 2.5 L4.5 0.5" stroke="#2a5aa8" stroke-width="1" fill="none"/></svg>
<div class="a" style="left:689px;top:260.5px;width:8.4px;height:6.7px;background:linear-gradient(#e0f0fe,#a4d0f6);border:1px solid #8ab8e8"></div>
<svg class="a" style="left:691px;top:262.5px" width="5" height="4"><path d="M0.5 0.5 L2.5 2.5 L4.5 0.5" stroke="#2a5aa8" stroke-width="1" fill="none"/></svg>

<!-- signals tabs -->
<div class="a" style="left:373.5px;top:275.8px;width:368px;height:142px;background:#f2f2f2"></div>
<div class="a" style="left:378px;top:277.5px;width:32.7px;height:13px;background:linear-gradient(#e6fad8,#a6e68a);border:1px solid #8ed070;border-bottom:none;border-radius:2px 2px 0 0"></div>
<div class="t" style="left:382px;top:279.2px;font-size:8.14px;color:#1e2a1a;transform:scaleX(0.9);transform-origin:0 0">Signals</div>
<div class="a" style="left:410.7px;top:278.5px;width:30px;height:12px;background:linear-gradient(#f2f8fe,#c4e0fa);border:1px solid #a8cdf0;border-bottom:none;border-radius:2px 2px 0 0"></div>
<div class="t" style="left:413px;top:280px;font-size:8.14px;color:#1e2a3a;transform:scaleX(0.9);transform-origin:0 0">Cursors</div>
<div class="a" style="left:441px;top:278.5px;width:28.5px;height:12px;background:linear-gradient(#f2f8fe,#d4e8fa);border:1px solid #b8d6f2;border-bottom:none;border-radius:2px 2px 0 0"></div>
<div class="t" style="left:446px;top:280px;font-size:8.14px;color:#9ab0c0;transform:scaleX(0.9);transform-origin:0 0">Riders</div>
<div class="a" style="left:470px;top:278.5px;width:38px;height:12px;background:linear-gradient(#f2f8fe,#d4e8fa);border:1px solid #b8d6f2;border-bottom:none;border-radius:2px 2px 0 0"></div>
<div class="t" style="left:473px;top:280px;font-size:8.14px;color:#9ab0c0;transform:scaleX(0.9);transform-origin:0 0">Statistics</div>
<div class="a" style="left:376.4px;top:290.6px;width:364.2px;height:124.7px;background:#f8f8f8;border:1px solid #d8d8d8"></div>
<div class="a" style="left:380px;top:316.5px;width:355.5px;height:95.8px;background:#fff;border:1px solid #d4d4d4"></div>
<!-- number/display -->
<div class="a" style="left:377.5px;top:295.7px;width:68px;height:13.2px;border:2px solid #e0202a"></div>
<div class="t" style="left:383.6px;top:297.8px;font-size:7.65px;transform:scaleX(0.9);transform-origin:0 0">Number</div>
<div class="a" style="left:411.2px;top:297.2px;width:29.2px;height:10.8px;background:#fff;border:1px solid #dadada"></div>
<div class="t" style="left:413px;top:297.8px;font-size:8.58px;transform:scaleX(0.9);transform-origin:0 0">2</div>
<div class="a" style="left:432.5px;top:297.8px;width:8.5px;height:9.2px;background:linear-gradient(#e0f0fe,#a4d0f6);border:1px solid #8ab8e8"></div>
<svg class="a" style="left:434.6px;top:300.8px" width="5" height="4"><path d="M0.5 0.5 L2.5 2.5 L4.5 0.5" stroke="#2a5aa8" stroke-width="1" fill="none"/></svg>
<div class="t" style="left:446.8px;top:297.8px;font-size:7.6px;transform:scaleX(0.82);transform-origin:0 0">Display</div>
<div class="a" style="left:468px;top:293.7px;width:93.5px;height:20.5px;border:2px solid #e0202a"></div>
<div class="a" style="left:475px;top:297.2px;width:83px;height:11px;background:#fff;border:1px solid #c4c4c4"></div>
<div class="t" style="left:477px;top:297.8px;font-size:8.58px;transform:scaleX(0.9);transform-origin:0 0">XY-CH1</div>
<div class="a" style="left:549px;top:298px;width:8.5px;height:9.4px;background:linear-gradient(#e0f0fe,#a4d0f6);border:1px solid #8ab8e8"></div>
<svg class="a" style="left:551px;top:301px" width="5" height="4"><path d="M0.5 0.5 L2.5 2.5 L4.5 0.5" stroke="#2a5aa8" stroke-width="1" fill="none"/></svg>
<div class="a" style="left:565px;top:297.5px;width:7.5px;height:7.5px;background:linear-gradient(#f4faff,#cfe4f8);border:1px solid #98bce0"></div>
<div class="t" style="left:575px;top:297.2px;font-size:8.14px;transform:scaleX(0.9);transform-origin:0 0">Q Grid</div>
<!-- table -->
<div class="a" style="left:372.6px;top:315.2px;width:209.8px;height:44px;border:2px solid #e0202a"></div>
<div class="a" style="left:381.8px;top:318.6px;width:352.2px;height:11.9px;background:linear-gradient(#f8f8f8,#e2e2e2);border:1px solid #c8c8c8"></div>
<div class="a" style="left:410.8px;top:318.6px;width:1px;height:34px;background:#d4d4d4"></div><div class="a" style="left:445.9px;top:318.6px;width:1px;height:34px;background:#d4d4d4"></div><div class="a" style="left:526.7px;top:318.6px;width:1px;height:34px;background:#d4d4d4"></div><div class="a" style="left:581.0px;top:318.6px;width:1px;height:34px;background:#d4d4d4"></div><div class="a" style="left:645.0px;top:318.6px;width:1px;height:34px;background:#d4d4d4"></div><div class="a" style="left:690.0px;top:318.6px;width:1px;height:34px;background:#d4d4d4"></div><div class="t" style="left:381.8px;width:32.78px;text-align:center;top:319.5px;font-size:8.14px;transform:scaleX(0.9);transform-origin:0 0">Chan...</div><div class="t" style="left:411.3px;width:39.00px;text-align:center;top:319.5px;font-size:8.14px;transform:scaleX(0.9);transform-origin:0 0">State</div><div class="t" style="left:446.4px;width:89.78px;text-align:center;top:319.5px;font-size:8.14px;transform:scaleX(0.9);transform-origin:0 0">Variable</div><div class="t" style="left:527.2px;width:60.33px;text-align:center;top:319.5px;font-size:8.14px;transform:scaleX(0.9);transform-origin:0 0">Axis / Index</div><div class="t" style="left:581.5px;width:71.11px;text-align:center;top:319.5px;font-size:8.14px;transform:scaleX(0.9);transform-origin:0 0">Scale / Limits</div><div class="t" style="left:645.5px;width:50.00px;text-align:center;top:319.5px;font-size:8.14px;transform:scaleX(0.9);transform-origin:0 0">Shift</div><div class="t" style="left:690.5px;width:48.33px;text-align:center;top:319.5px;font-size:8.14px;transform:scaleX(0.9);transform-origin:0 0">Y Scale</div><div class="a" style="left:381.8px;top:341.6px;width:352.2px;height:1px;background:#e4e4e4"></div><div class="a" style="left:381.8px;top:352px;width:352.2px;height:1px;background:#e4e4e4"></div><div class="a" style="left:734px;top:330.5px;width:1px;height:22px;background:#e4e4e4"></div><div class="a" style="left:382px;top:330.8px;width:29px;height:10.8px;background:#ffff00"></div><div class="a" style="left:382px;top:342px;width:29px;height:10.2px;background:#ff0000"></div><div class="t" style="left:389.5px;top:332px;font-size:8.36px;color:#000;transform:scaleX(0.9);transform-origin:0 0">X</div><div class="t" style="left:413.8px;top:332px;font-size:8.14px;transform:scaleX(0.9);transform-origin:0 0">On</div><div class="t" style="left:448.9px;top:332px;font-size:8.14px;transform:scaleX(0.9);transform-origin:0 0">Feedback Position</div><div class="t" style="left:529.7px;top:332px;font-size:8.14px;transform:scaleX(0.9);transform-origin:0 0">(0)</div><div class="t" style="left:584.0px;top:332px;font-size:8.14px;transform:scaleX(0.9);transform-origin:0 0">5E+002 units/div</div><div class="t" style="left:648.0px;top:332px;font-size:8.14px;transform:scaleX(0.9);transform-origin:0 0">5.000 div</div><div class="t" style="left:693.0px;top:332px;font-size:8.14px;transform:scaleX(0.9);transform-origin:0 0">None</div><div class="t" style="left:384.7px;top:342.7px;font-size:8.36px;color:#400000;transform:scaleX(0.9);transform-origin:0 0">CH2</div><div class="t" style="left:413.8px;top:342.7px;font-size:8.14px;transform:scaleX(0.9);transform-origin:0 0">On</div><div class="t" style="left:448.9px;top:342.7px;font-size:8.14px;transform:scaleX(0.9);transform-origin:0 0">Feedback Position</div><div class="t" style="left:529.7px;top:342.7px;font-size:8.14px;transform:scaleX(0.9);transform-origin:0 0">(1)</div><div class="t" style="left:584.0px;top:342.7px;font-size:8.14px;transform:scaleX(0.9);transform-origin:0 0">5E+002 units/div</div><div class="t" style="left:648.0px;top:342.7px;font-size:8.14px;transform:scaleX(0.9);transform-origin:0 0">5.000 div</div><div class="t" style="left:693.0px;top:342.7px;font-size:8.14px;transform:scaleX(0.9);transform-origin:0 0">None</div>
</body></html>
